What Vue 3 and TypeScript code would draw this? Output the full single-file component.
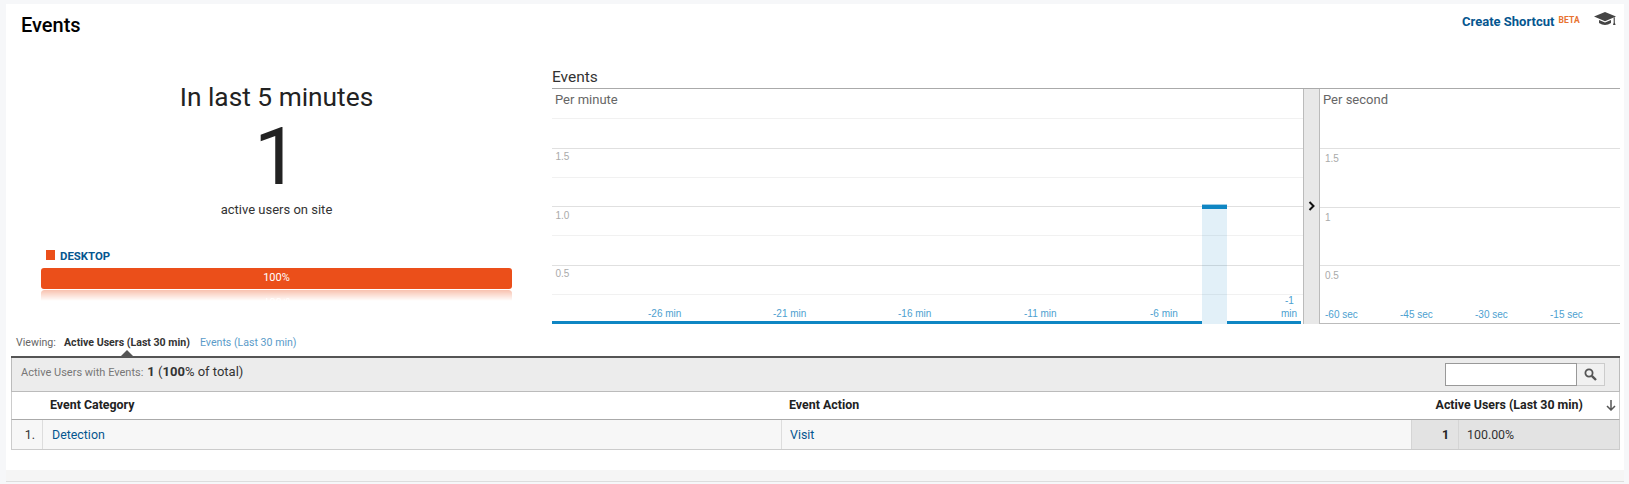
<script setup lang="ts">
const minuteGrid = [
  { y: 118.5, c: '#f1f1f1' }, { y: 148.5, c: '#e0e0e0' }, { y: 177.5, c: '#f1f1f1' }, { y: 206.5, c: '#e0e0e0' },
  { y: 235.5, c: '#f1f1f1' }, { y: 265.5, c: '#e0e0e0' }, { y: 294.5, c: '#f1f1f1' },
].map((g) => ({ y: g.y - 89, c: g.c }))
const minuteY = [{ t: '1.5', y: 160 }, { t: '1.0', y: 219 }, { t: '0.5', y: 277 }].map((l) => ({ t: l.t, y: l.y - 89 }))
const minuteX = [
  { t: '-26 min', x: 648 }, { t: '-21 min', x: 773 }, { t: '-16 min', x: 898 }, { t: '-11 min', x: 1024 }, { t: '-6 min', x: 1150 },
].map((l) => ({ t: l.t, x: l.x - 552 }))
const secondGrid = [148.5, 207.5, 265.5].map((y) => y - 89)
const secondY = [{ t: '1.5', y: 162 }, { t: '1', y: 221 }, { t: '0.5', y: 279 }].map((l) => ({ t: l.t, y: l.y - 89 }))
const secondX = [{ t: '-60 sec', x: 1325 }, { t: '-45 sec', x: 1400 }, { t: '-30 sec', x: 1475 }, { t: '-15 sec', x: 1550 }].map((l) => ({ t: l.t, x: l.x - 1320 }))
</script>

<template>
  <div class="page">
    <div class="panel">
      <header class="head">
        <h1>Events</h1>
        <div class="tools">
          <a class="shortcut">Create Shortcut</a>
          <sup class="beta">BETA</sup>
          <svg class="cap" width="22" height="14" viewBox="0 0 22 14">
            <path d="M11 0 L22 4.6 L11 9.2 L0 4.6 Z" fill="#444" />
            <path d="M5 8 L5 11 Q11 14.8 17 11 L17 8 L11 10.6 Z" fill="#444" />
            <path d="M19.6 5.6 L20.8 5.2 L20.8 10.6 L21.6 13 L19 13 L19.7 10.6 Z" fill="#444" />
          </svg>
        </div>
      </header>

      <section class="overview">
        <div class="summary">
          <div class="period">In last 5 minutes</div>
          <div class="count">1</div>
          <div class="caption">active users on site</div>
          <div class="legend"><i></i><span>DESKTOP</span></div>
          <div class="bar">100%</div>
          <div class="reflect bar">100%</div>
        </div>

        <div class="chart">
          <div class="chart-title">Events</div>
          <div class="plots">
            <div class="plot minute">
              <div class="plot-label">Per minute</div>
              <svg width="751" height="235" viewBox="0 0 751 235">
                <line v-for="g in minuteGrid" :key="g.y" x1="0" x2="751" :y1="g.y" :y2="g.y" :stroke="g.c" />
                <text v-for="l in minuteY" :key="l.t" class="ylab" x="3.5" :y="l.y">{{ l.t }}</text>
                <text v-for="l in minuteX" :key="l.t" class="xlab" :x="l.x" y="228">{{ l.t }}</text>
                <text class="xlab" x="733" y="215">-1</text>
                <text class="xlab" x="729" y="228">min</text>
                <rect x="650" y="115" width="25" height="120" fill="#0f86c3" fill-opacity="0.12" />
                <rect x="650" y="115" width="25" height="1" fill="#9fcde6" />
                <rect x="650" y="116" width="25" height="4" fill="#0f86c3" />
                <rect x="0" y="232" width="650" height="3" fill="#0f86c3" />
                <rect x="675" y="232" width="74" height="3" fill="#0f86c3" />
              </svg>
            </div>
            <div class="divider">
              <svg width="8" height="10" viewBox="0 0 8 10"><path d="M1.5 1 L5.5 5 L1.5 9" fill="none" stroke="#111" stroke-width="2" /></svg>
            </div>
            <div class="plot second">
              <div class="plot-label">Per second</div>
              <svg width="300" height="235" viewBox="0 0 300 235">
                <line v-for="y in secondGrid" :key="y" x1="0" x2="300" :y1="y" :y2="y" stroke="#e0e0e0" />
                <text v-for="l in secondY" :key="l.t" class="ylab" x="5" :y="l.y">{{ l.t }}</text>
                <text v-for="l in secondX" :key="l.t" class="xlab" :x="l.x" y="229">{{ l.t }}</text>
                <line x1="0" x2="300" y1="234.5" y2="234.5" stroke="#bbb" />
              </svg>
            </div>
          </div>
        </div>
      </section>

      <nav class="views">
        <span class="viewing">Viewing:</span>
        <span class="tab active">Active Users (Last 30 min)</span>
        <span class="tab">Events (Last 30 min)</span>
      </nav>

      <section class="table">
        <div class="table-summary">
          <div class="totals">
            <span class="totals-label">Active Users with Events:</span>
            <span class="totals-value"><b>1</b> (<b>100</b>% of total)</span>
          </div>
          <div class="search">
            <input type="text" aria-label="Search" />
            <button aria-label="Search">
              <svg width="13" height="13" viewBox="0 0 13 13">
                <circle cx="5" cy="5" r="3.6" fill="none" stroke="#555" stroke-width="1.8" />
                <path d="M7.8 7.8 L12 12" stroke="#555" stroke-width="2.4" />
              </svg>
            </button>
          </div>
        </div>
        <div class="row header">
          <div class="c-num"></div>
          <div class="c-cat">Event Category</div>
          <div class="c-act">Event Action</div>
          <div class="c-users">Active Users (Last 30 min)
            <svg width="10" height="11" viewBox="0 0 10 11"><path d="M5 0 V10 M1 6 L5 10 L9 6" fill="none" stroke="#555" stroke-width="1.5" /></svg>
          </div>
        </div>
        <div class="row body">
          <div class="c-num">1.</div>
          <div class="c-cat"><a>Detection</a></div>
          <div class="c-act"><a>Visit</a></div>
          <div class="c-val">1</div>
          <div class="c-pct">100.00%</div>
        </div>
      </section>
    </div>
    <div class="foot"></div>
  </div>
</template>

<style>
html, body { margin: 0; background: #f6f7f9; }
</style>

<style scoped>
.page {
  height: 484px;
  width: 1629px;
  box-sizing: border-box;
  padding: 4px 5px 0 6px;
  overflow: hidden;
  background: #f6f7f9;
  font-family: Roboto, "Liberation Sans", sans-serif;
  color: #222;
}
.panel { height: 466px; background: #fff; box-sizing: border-box; }
.foot { height: 11px; background: #f5f5f5; border-bottom: 1px solid #ddd; }
.head { display: flex; justify-content: space-between; height: 56px; }
h1 { margin: 0; padding: 9px 0 0 15px; font-size: 20px; line-height: 24px; font-weight: 500; color: #000; }
.tools { display: flex; align-items: flex-start; padding: 10px 8px 0 0; }
.shortcut { font-size: 13px; line-height: 15px; font-weight: 700; color: #05568f; }
.beta { font-size: 8.5px; line-height: 10px; font-weight: 700; color: #e8732f; margin: 1px 14px 0 4px; letter-spacing: 0.2px; }
.cap { margin-top: -2px; }

.overview { display: flex; height: 268px; }
.summary { width: 471px; margin: 0 0 0 35px; display: flex; flex-direction: column; }
.period { margin-top: 21px; text-align: center; font-size: 26.3px; line-height: 32px; font-weight: 400; color: #222; }
.count { margin-top: 5px; text-align: center; font-size: 80px; line-height: 78px; font-weight: 400; color: #222; }
.caption { margin-top: 5px; text-align: center; font-size: 13px; line-height: 18px; color: #333; }
.legend { display: flex; align-items: flex-start; margin: 31px 0 0 5px; height: 18px; }
.legend i { width: 9px; height: 10px; background: #eb4f1a; margin-right: 5px; }
.legend span { font-size: 11.4px; line-height: 13px; font-weight: 700; color: #05568f; }
.bar {
  height: 21px; flex: none; background: #eb4f1a; border-radius: 3px;
  color: #fff; font-size: 11px; line-height: 20px; text-align: center;
}
.reflect {
  margin-top: 1px;
  transform: scaleY(-1);
  -webkit-mask-image: linear-gradient(to top, rgba(0,0,0,.35), rgba(0,0,0,0) 52%);
  mask-image: linear-gradient(to top, rgba(0,0,0,.35), rgba(0,0,0,0) 52%);
}

.chart { width: 1068px; margin-left: 40px; }
.chart-title { font-size: 15.5px; line-height: 18px; color: #333; margin-top: 8px; height: 19.5px; }
.plots { display: flex; border-top: 1.5px solid #aaa; height: 235px; }
.plot { position: relative; }
.plot svg { display: block; }
.plot-label { position: absolute; top: 2px; font-size: 13px; line-height: 18px; color: #666; }
.minute { width: 751px; }
.minute .plot-label { left: 3px; }
.second { width: 300px; }
.second .plot-label { left: 3px; }
.divider {
  width: 15px; flex: none; background: #e8e8e8;
  border-left: 1px solid #bbb; border-right: 1px solid #bbb;
  display: flex; justify-content: center; padding-top: 112px; box-sizing: content-box;
  height: 123px;
}
.divider svg { display: block; }
.ylab { font: 10px "Liberation Sans", sans-serif; fill: #aaa; }
.xlab { font: 10px "Liberation Sans", sans-serif; fill: #4d9fd0; }

.views { display: flex; align-items: center; height: 21px; margin: 4px 0 0 10px; font-size: 10.6px; }
.viewing { color: #666; width: 48px; }
.tab { color: #5a9bc9; margin-right: 10px; position: relative; }
.tab.active { color: #333; font-weight: 700; }
.tab.active::after {
  content: ""; position: absolute; left: 50%; bottom: -7px; margin-left: -6px;
  border: 6px solid transparent; border-top: 0; border-bottom-color: #555;
}

.table { margin: 3px 4px 0 5px; border-top: 2px solid #555; }
.table-summary {
  height: 33px; background: #ececec; border: 1px solid #bbb; border-width: 0 1px 1px;
  display: flex; justify-content: space-between; align-items: center;
  box-sizing: content-box;
}
.totals { display: flex; align-items: baseline; padding: 0 0 7px 9px; }
.totals-label { font-size: 11px; color: #777; }
.totals-value { font-size: 13px; color: #333; margin-left: 4px; }
.totals-value b { font-weight: 700; }
.search { display: flex; margin-right: 14px; }
.search input {
  width: 130px; height: 21px; padding: 0; margin: 0; border: 1px solid #999; background: #fff; outline: 0;
}
.search button {
  width: 28px; height: 23px; padding: 0; margin: 0; border: 1px solid #ccc; border-left: 0; background: #f1f1f1;
  display: flex; align-items: center; justify-content: center;
}
.row { display: flex; font-size: 12.4px; box-sizing: border-box; }
.header { height: 28px; background: #fff; border: 1px solid #ccc; border-width: 0 1px; border-bottom: 1px solid #aaa; line-height: 26px; font-weight: 700; color: #222; }
.body { height: 30px; background: #f7f7f7; border: 1px solid #ccc; border-top: 0; line-height: 29px; color: #333; }
.c-num { width: 31px; flex: none; text-align: right; padding-right: 7px; box-sizing: border-box; }
.c-cat { width: 739px; flex: none; box-sizing: border-box; padding-left: 9px; }
.c-act { width: 629px; flex: none; box-sizing: border-box; padding-left: 8px; }
.body .c-num { border-right: 1px solid #ddd; }
.body .c-cat { border-right: 1px solid #ddd; }
.header .c-num { width: 31px; }
.header .c-cat { padding-left: 7px; }
.header .c-act { padding-left: 7px; width: 600px; }
.c-users { flex: 1; text-align: right; white-space: nowrap; padding-right: 3px; }
.c-users svg { margin-left: 20px; vertical-align: -2px; }
.c-val { width: 48px; flex: none; box-sizing: border-box; background: #e3e3e3; border-right: 1px solid #d5d5d5; border-left: 1px solid #d5d5d5; text-align: right; padding-right: 9px; font-weight: 700; color: #222; }
.c-pct { flex: 1; background: #e3e3e3; padding-left: 8px; }
a { color: #05568f; }
</style>
